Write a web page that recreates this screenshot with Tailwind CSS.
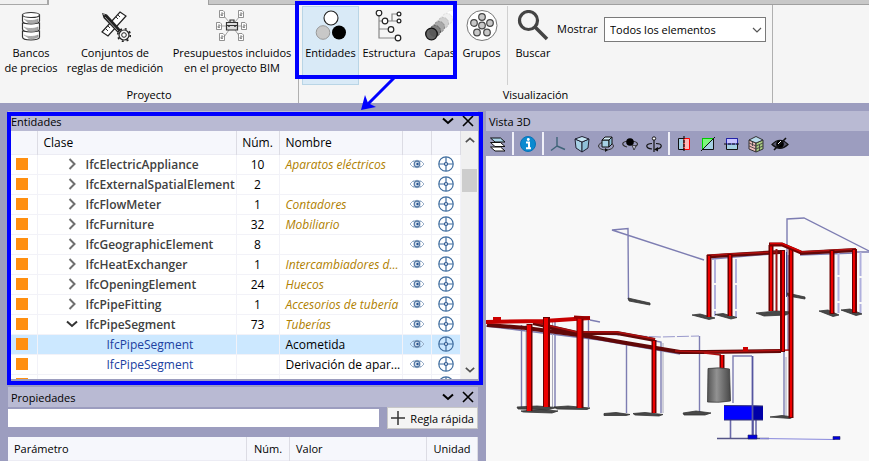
<!DOCTYPE html>
<html lang="es">
<head>
    <meta charset="UTF-8">
    <meta name="viewport" content="width=device-width, initial-scale=1.0">
    <title>Entidades</title>
    <script src="https://cdn.jsdelivr.net/npm/@tailwindcss/browser@4"></script>
</head>
<body class="relative flex min-h-screen flex-col overflow-hidden bg-[#9c9dbf] font-['Segoe_UI','Open_Sans',sans-serif] text-[11px] leading-[15px] text-black">

<!-- Shared icons -->
<svg class="hidden">
    <symbol id="eye" viewBox="0 0 16 12">
        <path d="M4.500 2.500 1 6l3.500 3.500M11.500 2.500 15 6l-3.500 3.500" fill="none" stroke="#9db2cb" stroke-width="1"/>
        <path d="M4 3.500Q8 1 12 3.500M4 8.500Q8 11 12 8.500" fill="none" stroke="#8ba4c0" stroke-width="1"/>
        <circle cx="8" cy="6" r="2.800" fill="#d5e0ed" stroke="#5479a6" stroke-width="1.200"/>
        <circle cx="8.500" cy="6" r="1.200" fill="#24508a"/>
    </symbol>
    <symbol id="target" viewBox="0 0 16 16">
        <circle cx="8" cy="8" r="7.200" fill="none" stroke="#3f6d9f" stroke-width="1.200"/>
        <path d="M8 1v5M8 10v5M1 8h5M10 8h5" stroke="#3f6d9f" stroke-width="1.200"/>
        <circle cx="8" cy="8" r="1.500" fill="#fff" stroke="#24508a" stroke-width="1.200"/>
    </symbol>
    <symbol id="down" viewBox="0 0 12 12"><path d="m1 3.500 5 4.500 5-4.500" fill="none" stroke="currentColor" stroke-width="2"/></symbol>
    <symbol id="right" viewBox="0 0 12 12"><path d="m3.500 1 5 5-5 5" fill="none" stroke="currentColor" stroke-width="2"/></symbol>
    <symbol id="close" viewBox="0 0 12 12"><path d="m1 1 10 10M11 1 1 11" fill="none" stroke="currentColor" stroke-width="1.600"/></symbol>
    <symbol id="doc" viewBox="0 0 6 8"><path d="M.5.5H4L5.500 2v5.500h-5zM2 3h2v1.200H2v1.300h2" fill="#fff" stroke="#777" stroke-width=".8"/></symbol>
</svg>

<!-- Tab strip -->
<div class="flex h-[5px] shrink-0 bg-[#f5f5f5]">
    <div class="w-[49px] border-r-2 border-b border-[#a8a8a8] bg-[#f0f0f0]"></div>
    <div class="w-[159px]"></div>
    <div class="flex-1 border-b border-l border-[#a0a0a0] bg-[#c8c8c8]"></div>
</div>

<!-- Ribbon -->
<div class="flex h-[98px] shrink-0 bg-[#f5f5f5]">
    <div class="flex w-[299px] flex-col border-r border-[#b0b0b0]">
        <div class="flex h-20 pt-px">
            <button class="flex w-[62px] flex-col items-center gap-[3px] pt-1 whitespace-nowrap">
                <svg class="size-8" viewBox="0 0 32 32">
                    <g fill="#fff" stroke="#333" stroke-width="1.200">
                        <path d="M7.500 21v6c0 4 17 4 17 0v-6z"/><path d="M7.500 13v6c0 4 17 4 17 0v-6z"/><path d="M7.500 5v6c0 4 17 4 17 0V5z"/>
                        <ellipse cx="16" cy="5" rx="8.500" ry="2.500"/>
                    </g>
                    <path d="M9 9c3 2 10 2 14 0v3c-3 2-8 2-10 1M9 17c3 2 10 2 14 0v3c-3 2-8 2-10 1M9 25c3 2 10 2 14 0v2c-3 2-8 2-10 1" fill="#aaa" stroke="#888" stroke-width=".6"/>
                </svg>
                <span>Bancos<br>de precios</span>
            </button>
            <button class="flex w-[106px] flex-col items-center gap-[3px] pt-1 whitespace-nowrap">
                <svg class="size-8" viewBox="0 0 32 32">
                    <path d="m21 2 6 4L9 26l-6-4z" fill="#fff" stroke="#222" stroke-width="1.200"/>
                    <path d="m19 5 2 2m-4 0 2 2M9 16l2 2m-4 1 2 2" stroke="#333"/>
                    <path d="m3 3 5 1.500L22 20l-3 3L4.500 8z" fill="#222"/>
                    <path d="m6 7 13 14M4 4l2 1" stroke="#bbb" stroke-width=".8"/>
                    <circle cx="25" cy="25" r="5" fill="#f5f5f5" stroke="#222" stroke-width="1.200"/>
                    <circle cx="25" cy="25" r="6.300" fill="none" stroke="#222" stroke-width="1.600" stroke-dasharray="2 2.950"/>
                    <circle cx="25" cy="25" r="2.300" fill="#fff" stroke="#222"/>
                </svg>
                <span>Conjuntos de<br>reglas de medición</span>
            </button>
            <button class="flex w-[128px] flex-col items-center gap-[3px] pt-1 whitespace-nowrap">
                <svg class="size-8" viewBox="0 0 32 32">
                    <path d="m8 6 5 6m11-6-5 6M8 27l5-7m11 7-5-7M6 16h4m12 0h4" stroke="#999" stroke-width=".9"/>
                    <use href="#doc" x="3" y="0" width="6" height="8"/><use href="#doc" x="22" y="0" width="6" height="8"/>
                    <use href="#doc" x="0" y="12" width="6" height="8"/><use href="#doc" x="25" y="12" width="6" height="8"/>
                    <use href="#doc" x="3" y="23" width="6" height="8"/><use href="#doc" x="22" y="23" width="6" height="8"/>
                    <path d="M10.500 12.500h11v7.500h-11zM14 12v-2h4v2M10.500 15.500h11" fill="#ddd" stroke="#333" stroke-width="1.200"/>
                    <path d="M13 15v2m6-2v2" stroke="#333" stroke-width="1.500"/>
                </svg>
                <span>Presupuestos incluidos<br>en el proyecto BIM</span>
            </button>
        </div>
        <div class="pt-0.5 text-center">Proyecto</div>
    </div>
    <div class="flex w-[474px] flex-col border-r border-[#b0b0b0]">
        <div class="flex h-20 pt-px pl-[3px]">
            <button class="flex w-[57px] flex-col items-center gap-[3px] border border-[#b9d5e6] bg-[#d9eaf7] pt-[3px]">
                <svg class="size-8" viewBox="0 0 32 32">
                    <circle cx="16" cy="8" r="7" fill="#fff" stroke="#222" stroke-width="1.100"/>
                    <circle cx="8" cy="22.500" r="6.800" fill="#c8c8c8" stroke="#999"/>
                    <circle cx="24" cy="22.500" r="7" fill="#000"/>
                </svg>
                <span>Entidades</span>
            </button>
            <button class="flex w-[60px] flex-col items-center gap-[3px] pt-1">
                <svg class="size-8" viewBox="0 0 32 32">
                    <path d="M6 3v25h17M6 19h11M6 11h6M15 11h10M19 11V4h6" fill="none" stroke="#888" stroke-width="1.200"/>
                    <g fill="#fff" stroke="#222" stroke-width="1.200"><circle cx="6" cy="3" r="2.800"/><circle cx="12" cy="11" r="2.800"/><circle cx="18" cy="19.500" r="2.800"/><circle cx="25" cy="28" r="2.800"/><circle cx="26" cy="4" r="1.900"/><circle cx="26" cy="11" r="1.900"/></g>
                </svg>
                <span>Estructura</span>
            </button>
            <button class="flex w-[41px] flex-col items-center gap-[3px] pt-1">
                <svg class="size-8" viewBox="0 0 32 32">
                    <circle cx="27" cy="6" r="5.500" fill="#fff" stroke="#eee"/><circle cx="23" cy="9" r="5.500" fill="#f0f0f0" stroke="#ddd" stroke-dasharray="2 1"/>
                    <circle cx="19" cy="13" r="5.500" fill="#d0d0d0" stroke="#bbb" stroke-dasharray="2 1"/><circle cx="15" cy="17" r="5.500" fill="#a8a8a8" stroke="#888" stroke-dasharray="2 1"/>
                    <circle cx="11" cy="21" r="5.500" fill="#808080" stroke="#555" stroke-dasharray="2 1"/><circle cx="7.500" cy="24" r="5.800" fill="#555" fill-opacity=".9" stroke="#111" stroke-width="1.300"/>
                </svg>
                <span>Capas</span>
            </button>
            <button class="flex w-[43px] flex-col items-center gap-[3px] pt-1">
                <svg class="size-8" viewBox="0 0 32 32">
                    <circle cx="16" cy="15.500" r="15" fill="#fff" stroke="#777"/>
                    <g fill="#c8c8c8" stroke="#444" stroke-width="1.200"><circle cx="16" cy="7" r="3.300"/><circle cx="8" cy="13" r="3.300"/><circle cx="24" cy="13" r="3.300"/><circle cx="16" cy="15.500" r="3.300"/><circle cx="11" cy="22.500" r="3.300"/><circle cx="21" cy="22.500" r="3.300"/></g>
                </svg>
                <span>Grupos</span>
            </button>
            <div class="mx-1 w-px bg-[#d0d0d0]"></div>
            <button class="flex w-[42px] flex-col items-center gap-[3px] pt-1">
                <svg class="size-8" viewBox="0 0 32 32"><circle cx="11.500" cy="10.500" r="9" fill="none" stroke="#444" stroke-width="3.200"/><path d="m18 17 12 12" stroke="#444" stroke-width="3.500"/></svg>
                <span>Buscar</span>
            </button>
            <div class="flex flex-1 items-start pt-[11px] pr-1.5">
                <label for="mostrar" class="w-[50px] pt-1 pl-[3px]">Mostrar</label>
                <div class="relative flex-1">
                    <select id="mostrar" class="h-[25px] w-full appearance-none border border-[#7a7a7a] bg-white px-[5px]"><option>Todos los elementos</option></select>
                    <svg class="pointer-events-none absolute top-2 right-1 size-2.5" viewBox="0 0 10 10"><path d="m1 3 4 4 4-4" fill="none" stroke="#555" stroke-width="1.200"/></svg>
                </div>
            </div>
        </div>
        <div class="pt-0.5 text-center">Visualización</div>
    </div>
</div>

<main class="flex flex-1 gap-2 pt-2 pl-2">
    <div class="flex w-[470px] flex-col gap-2">
        <!-- Entidades -->
        <section>
            <header class="flex h-5 items-center bg-[#b9bad3] pr-1 pl-[3px]">
                <h2 class="flex-1">Entidades</h2>
                <button class="mr-2" aria-label="Menú"><svg class="size-3"><use href="#down"/></svg></button>
                <button aria-label="Cerrar"><svg class="size-3"><use href="#close"/></svg></button>
            </header>
            <div class="flex h-62 overflow-hidden bg-white">
                <div class="flex-1 overflow-hidden">
                    <table class="w-full table-fixed border-collapse text-[12px] leading-[15px]">
                        <colgroup><col class="w-[29px]"><col class="w-[199px]"><col class="w-[43px]"><col><col class="w-[29px]"><col class="w-[29px]"></colgroup>
                        <thead>
                            <tr class="h-[23px] border-b border-[#ececf4] bg-[#f6f7fc] text-left">
                                <th class="border-r border-[#dcdce4]"></th>
                                <th class="border-r border-[#dcdce4] px-1.5 font-normal">Clase</th>
                                <th class="border-r border-[#dcdce4] text-center font-normal">Núm.</th>
                                <th class="border-r border-[#dcdce4] px-1.5 font-normal">Nombre</th>
                                <th class="border-r border-[#dcdce4]"></th>
                                <th class="border-r border-[#dcdce4]"></th>
                            </tr>
                        </thead>
                        <tbody id="entidades"></tbody>
                    </table>
                </div>
                <div class="flex w-[17px] flex-col items-center bg-[#f0f0f0] py-1 text-[#505050]">
                    <svg class="size-2.5 rotate-180"><use href="#down"/></svg>
                    <div class="mt-6 h-[23px] w-[15px] bg-[#cdcdcd]"></div>
                    <svg class="mt-auto size-2.5"><use href="#down"/></svg>
                </div>
            </div>
        </section>

        <!-- Propiedades -->
        <section class="flex flex-1 flex-col">
            <header class="flex h-5 items-center bg-[#b9bad3] pr-1 pl-[3px]">
                <h2 class="flex-1">Propiedades</h2>
                <button class="mr-2" aria-label="Menú"><svg class="size-3"><use href="#down"/></svg></button>
                <button aria-label="Cerrar"><svg class="size-3"><use href="#close"/></svg></button>
            </header>
            <div class="mb-2 flex items-center gap-2">
                <input type="text" aria-label="Filtro" class="h-[18px] flex-1 bg-white px-1">
                <button class="flex h-[22px] w-[91px] items-center justify-between border border-[#c8c8c8] bg-[#f4f4f4] px-[3px] whitespace-nowrap">
                    <svg class="size-3.5 shrink-0" viewBox="0 0 14 14"><path d="M7 0v14M0 7h14" stroke="#333" stroke-width="1.500"/></svg>
                    Regla rápida
                </button>
            </div>
            <div class="flex-1 bg-white">
                <table class="w-full table-fixed border-collapse">
                    <colgroup><col><col class="w-[43px]"><col class="w-[137px]"><col class="w-[51px]"></colgroup>
                    <thead>
                        <tr class="h-[23px] border-b border-[#ececf4] bg-[#f6f7fc] text-left">
                            <th class="border-r border-[#dcdce4] px-1.5 font-normal">Parámetro</th>
                            <th class="border-r border-[#dcdce4] text-center font-normal">Núm.</th>
                            <th class="border-r border-[#dcdce4] px-1.5 font-normal">Valor</th>
                            <th class="border-r border-[#dcdce4] text-center font-normal">Unidad</th>
                        </tr>
                    </thead>
                </table>
            </div>
        </section>
    </div>

    <!-- Vista 3D -->
    <section class="flex flex-1 flex-col">
        <header class="flex h-5 items-center bg-[#b9bad3] pl-[3px]"><h2>Vista 3D</h2></header>
        <div class="flex h-[25px] items-center">
            <button class="flex w-6 justify-center" aria-label="Capas"><svg class="size-5" viewBox="0 0 20 20"><g stroke="#111" stroke-width="1"><path d="M2.500 13h10l4.500 4H7z" fill="#fff"/><path d="M2.500 8.500h10l4.500 4H7z" fill="#fff"/><path d="M2.500 4h10L17 8H7z" fill="#a9d4e8"/></g></svg></button>
            <div class="mx-0.5 h-[23px] w-0.5 bg-[#f0f0f8]"></div>
            <button class="flex w-6 justify-center" aria-label="Información"><svg class="size-5" viewBox="0 0 20 20"><circle cx="10" cy="10" r="7.500" fill="#0a8ad0" stroke="#0872b8"/><path d="M8 8.500h3V14M8 14.300h5" fill="none" stroke="#fff" stroke-width="2"/><circle cx="10.300" cy="5.500" r="1.400" fill="#fff"/></svg></button>
            <div class="mx-0.5 h-[23px] w-0.5 bg-[#f0f0f8]"></div>
            <button class="flex w-6 justify-center" aria-label="Ejes"><svg class="size-5" viewBox="0 0 20 20"><path d="M9 3v9L3 16.500M9 12l8 3.500" fill="none" stroke="#3f6478" stroke-width="1.400"/></svg></button>
            <button class="flex w-6 justify-center" aria-label="Cubo"><svg class="size-5" viewBox="0 0 20 20"><g stroke="#223" stroke-width="1"><path d="m3 5 7 3v10l-6-4z" fill="#a6d0e4"/><path d="m17 5-7 3v10l6-4z" fill="#8fbfd8"/><path d="m3 5 7-2.500L17 5l-7 3z" fill="#c5e6f4"/></g></svg></button>
            <button class="flex w-6 justify-center" aria-label="Orbitar"><svg class="size-5" viewBox="0 0 20 20"><ellipse cx="10" cy="12" rx="7.500" ry="4" fill="none" stroke="#333"/><g stroke="#111"><path d="M6 6h7v7H6z" fill="#a6d0e4"/><path d="m6 6 3-3h7l-3 3z" fill="#d4edf8"/><path d="m13 6 3-3v7l-3 3z" fill="#8fbfd8"/></g><path d="m9 14 3 2-3 2z" fill="#111"/></svg></button>
            <button class="flex w-6 justify-center" aria-label="Girar"><svg class="size-5" viewBox="0 0 20 20"><path d="M7 13C0 11 2 7 10 7s10 4 4 6" fill="none" stroke="#333" stroke-width="1.200"/><circle cx="10" cy="8" r="3.800" fill="#000"/><path d="m12 11 2 5 2-4z" fill="#ccd" stroke="#222" stroke-width=".8"/></svg></button>
            <button class="flex w-6 justify-center" aria-label="Rotar eje"><svg class="size-5" viewBox="0 0 20 20"><path d="M8 9.500C1 9.500 1 14 8 15M12 9.500c7 0 7 4.500 0 5.500M10 6v12" fill="none" stroke="#111" stroke-width="1.200"/><circle cx="10" cy="4.500" r="1.700" fill="#fff" stroke="#111"/><path d="m14 13-4 2.500 4 2z" fill="#111"/></svg></button>
            <div class="mx-0.5 h-[23px] w-0.5 bg-[#f0f0f8]"></div>
            <button class="flex w-6 justify-center" aria-label="Sección vertical"><svg class="size-5" viewBox="0 0 20 20"><path d="M4.500 4.500H10v11H4.500z" fill="#a6d0e4" stroke="#111"/><path d="M10 4.500h5.500v11H10z" fill="#ffb8b8" stroke="#f00"/><path d="M10 2v16" stroke="#111" stroke-width="1.200" stroke-dasharray="3 1"/></svg></button>
            <button class="flex w-6 justify-center" aria-label="Sección diagonal"><svg class="size-5" viewBox="0 0 20 20"><path d="M4.500 4.500h11v11h-11z" fill="#a6d0e4" stroke="#111"/><path d="M4.500 4.500h11l-11 11z" fill="#7cf77c" stroke="#0c0"/><path d="M3 17 17 3" stroke="#111"/></svg></button>
            <button class="flex w-6 justify-center" aria-label="Sección horizontal"><svg class="size-5" viewBox="0 0 20 20"><path d="M4.500 4.500h11v11h-11z" fill="#a6d0e4" stroke="#111"/><path d="M4.500 4.500h11V10h-11z" fill="#c8c4ff" stroke="#22a"/><path d="M2 10h16" stroke="#111" stroke-width="1.200" stroke-dasharray="3 1"/></svg></button>
            <button class="flex w-6 justify-center" aria-label="Texturas"><svg class="size-5" viewBox="0 0 20 20"><path d="m3 6 7 3v9l-7-3z" fill="#eebcbc" stroke="#333"/><path d="m17 6-7 3v9l7-3z" fill="#a8cc80" stroke="#333"/><path d="m3 6 7-3.500L17 6l-7 3z" fill="#b8dcec" stroke="#333"/><path d="m3 9 7 3 7-3M3 12l7 3 7-3M6.500 8v4M13.500 11v5" fill="none" stroke="#444" stroke-width=".9"/></svg></button>
            <button class="flex w-6 justify-center" aria-label="Ocultar"><svg class="size-5" viewBox="0 0 20 20"><path d="M2 10.500Q10 2 18 10.500 10 18 2 10.500z" fill="#55556a" stroke="#111" stroke-width="1.200"/><circle cx="10" cy="10" r="3.800" fill="#000"/><path d="M4 16 16 4" stroke="#111" stroke-width="1.600"/><path d="m8 10 3-3" stroke="#fff"/></svg></button>
        </div>
        <div class="flex-1 bg-[#f8f8f8]">
            <svg class="h-full w-full" viewBox="486 156 383 305" fill="none">
                <defs><linearGradient id="tank"><stop offset="0" stop-color="#555"/><stop offset=".4" stop-color="#929292"/><stop offset="1" stop-color="#484848"/></linearGradient></defs>
                <!-- thin water lines -->
                <g stroke="#7d7db2" stroke-width="1.400">
                    <path d="M704 260 612 230l16-1.500.5 71M787 294v-75l17-1 65 33"/>
                    <path d="M521.500 325v82M555 320v87M588.500 320v87M590 320l10 2M626.500 343v70M655 341l6 1v71"/>
                    <path d="M784 352v65M733 403v-47h19M699.500 336v76M486 326l114 14 80 14"/>
                    <path d="M783 255v95M788 255v95"/>
                    <path d="M856 252h13M712 259l60-5M800 255l55-2"/>
                </g>
                <path d="M526 325v82M552.500 320v87M663 343v70M786 417v-60" stroke="#aaaabb"/>
                <path d="M607 334.500 660 337l39-1" stroke="#9999cc" stroke-dasharray="12 2"/>
                <path d="M715 259v57M736 259v58M838.500 251v62M860.500 252v62" stroke="#b0b0dd" stroke-width="2" stroke-dasharray="24 2"/>
                <!-- fixtures -->
                <g fill="#484848" stroke="#333" stroke-width=".8">
                    <path d="m628 298 22 5v2l-21-4zM787 293l18 4v2l-17-3zM692 315l8-1 15 4-6 1.500zM715 314.500l8-1 14 4-6 1.500zM756 313l20-2 16 1-6 3-22 1zM819 311l9-1 11 5-6 1.500zM841 310l9-1 12 5-6 1.500z"/>
                    <path d="m517 407 20-1 20 1.500-8 2-31-.5zM521 411l20-1.500 17 1.500-6 2-29-1zM554 407l14-1 22 2-3 1.500-30-.5zM604 413.500l12-1 14 2-4 1h-22zM633 413.500l12-1 18 2-4 1.500-24-1zM683 413l13-2 15 2-6 2h-21zM770 417l12-1.500 11 1.500-3 1.500z"/>
                </g>
                <!-- main pipes -->
                <g stroke="#620808" stroke-width="4">
                    <path d="m487 325 39 3 60 8 40 7 54 9h25l76-1M533 323l44 10h40l38 7"/>
                    <path d="M707 256.500 730 255l50-3M800 253l56-3"/>
                </g>
                <g stroke="#b01010" stroke-width="1.500">
                    <path d="m533 322 44 10h40l38 7M675 351l30 1 86-2M707 255.500 730 254l45-2M800 252l56-3M704 353l17 2"/>
                </g>
                <path d="m486 322 58-1 46-3" stroke="#c80000" stroke-width="4"/><path d="M493 318.500h8" stroke="#c00" stroke-width="3"/>
                <g stroke="#6c0000" stroke-width="5">
                    <path d="M709 255v62M730 254v62M771 245v66M832 250v64M854.500 249v64M782.500 250v102M791 249v169M654 340v73M722 355v13"/>
                    <path d="M529.500 324v87" stroke-width="6"/>
                    <path d="M546.500 317v90M580 317v91" stroke-width="7"/>
                </g>
                <g stroke="#ee0000" stroke-width="2">
                    <path d="M709 256v61M730 255v61M771 246v65M832 251v62M854 250v62M783 251v100M791 250v167M654 341v72M722 355v13"/>
                    <path d="M776.500 249v62" stroke="#a01010"/>
                    <path d="M529 325v86M546 318v89M579.500 318v90" stroke-width="4"/>
                </g>
                <path d="M769 244.500h13l19 8" stroke="#750000" stroke-width="4"/><path d="M770 243.500h12l19 8" stroke="#dc0000" stroke-width="1.500"/>
                <path d="M743 347h5v4h-5z" fill="#c00"/><path d="M786.500 252v45" stroke="#44448c"/>
                <path d="m574 317 16 1" stroke="#990000" stroke-width="3"/>
                <!-- tank and meter -->
                <path d="M708 368.500q11-1.500 21.500.5l1 32q-11 2-23 1z" fill="url(#tank)" stroke="#3c3c3c" stroke-width=".8"/>
                <path d="M730.500 420v18M756 420v18M753 420v18" stroke="#6a6aaa" stroke-width="1.600"/>
                <path d="M724 405.500h28v14.500h-28z" fill="#0000ff"/><path d="M752 405.500 763 406v14h-11z" fill="#0000a8"/><path d="m724 405.500 39 .5M724 420h39" stroke="#333370"/>
                <path d="M752.500 356v81" stroke="#5555a0" stroke-width="1.800"/>
                <path d="M717 438.500h52" stroke="#555588" stroke-width="1.400"/><path d="m760 438.500 75 1" stroke="#8888dd"/>
                <path d="M748 435h9v4h-9zM833 436.500h7v3h-7z" fill="#0000dd" stroke="#222260" stroke-width=".6"/>
            </svg>
        </div>
    </section>
</main>

<!-- Highlights over the window -->
<div class="pointer-events-none absolute top-px left-[295px] h-[78px] w-[162px] border-4 border-[#0000ff]"></div>
<div class="pointer-events-none absolute top-28 left-[7px] h-[273px] w-[476px] border-4 border-[#0000ff]"></div>
<svg class="pointer-events-none absolute top-[77px] left-[355px] h-[36px] w-[42px]" viewBox="355 77 42 36"><path d="m394 78-27 27" stroke="#0000ff" stroke-width="3"/><path d="m361 110 4-15 3 8 8 4z" fill="#0000ff"/></svg>

<script>
    const filas = [
        ['IfcElectricAppliance', 10, 'Aparatos eléctricos'],
        ['IfcExternalSpatialElement', 2, ''],
        ['IfcFlowMeter', 1, 'Contadores'],
        ['IfcFurniture', 32, 'Mobiliario'],
        ['IfcGeographicElement', 8, ''],
        ['IfcHeatExchanger', 1, 'Intercambiadores d...'],
        ['IfcOpeningElement', 24, 'Huecos'],
        ['IfcPipeFitting', 1, 'Accesorios de tubería'],
        ['IfcPipeSegment', 73, 'Tuberías', 'abierta'],
        ['IfcPipeSegment', '', 'Acometida', 'hija', true],
        ['IfcPipeSegment', '', 'Derivación de apar...', 'hija'],
        ['', '', '', 'hija']
    ];

    document.getElementById('entidades').innerHTML = filas.map(([clase, num, nombre, tipo, activa]) => {
        const hija = tipo === 'hija';
        const flecha = tipo === 'abierta' ? 'down' : 'right';
        const icono = hija ? '' : `<svg class="size-3 shrink-0 ${tipo ? 'text-[#333333]' : 'text-[#707070]'}"><use href="#${flecha}"/></svg>`;
        return `
            <tr class="h-5 border-b border-[#f2f2f8] ${activa ? 'bg-[#cce8ff]' : 'bg-white'}">
                <td class="border-r border-[#f2f2f8] pl-2"><div class="size-3 bg-[#ff8f10]"></div></td>
                <td class="border-r border-[#f2f2f8] p-0">
                    <div class="flex items-center whitespace-nowrap ${hija ? 'pl-[69px] text-[#2040a0]' : 'gap-2 pl-7 font-semibold text-[#404040]'}">${icono}${clase}</div>
                </td>
                <td class="border-r border-[#f2f2f8] p-0 text-center">${num}</td>
                <td class="border-r border-[#f2f2f8] py-0 pl-1.5 pr-0 whitespace-nowrap ${hija ? '' : 'text-[#b08000] italic'}">${nombre}</td>
                <td class="border-r border-[#f2f2f8] p-0"><svg class="mx-auto h-3 w-4"><use href="#eye"/></svg></td>
                <td class="border-r border-[#f2f2f8] p-0"><svg class="mx-auto size-4"><use href="#target"/></svg></td>
            </tr>`;
    }).join('');
</script>
</body>
</html>
